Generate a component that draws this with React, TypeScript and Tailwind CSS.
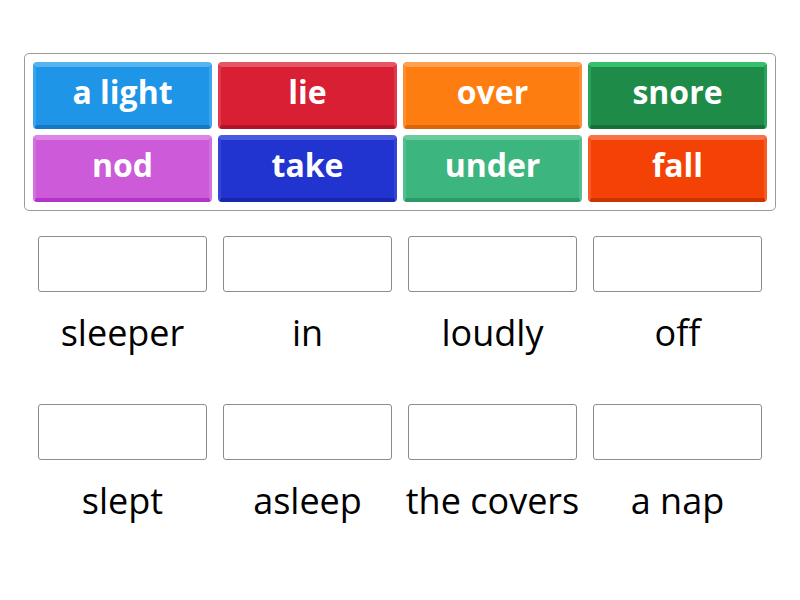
const tiles = [
  { word: 'a light', cls: 'bg-[#1e95e6] border-t-[#55b3f0] border-x-[#3aa4ec] border-b-[#1579c4]' },
  { word: 'lie', cls: 'bg-[#d81f34] border-t-[#e65565] border-x-[#df3a4c] border-b-[#b1142a]' },
  { word: 'over', cls: 'bg-[#fd7d11] border-t-[#ffa050] border-x-[#fe8d30] border-b-[#d9660a]' },
  { word: 'snore', cls: 'bg-[#1f8b49] border-t-[#35c06c] border-x-[#28a45a] border-b-[#16703a]' },
  { word: 'nod', cls: 'bg-[#cd5ad9] border-t-[#dc85e5] border-x-[#d46fdf] border-b-[#b533c8]' },
  { word: 'take', cls: 'bg-[#2134cf] border-t-[#4a5ae0] border-x-[#3344d6] border-b-[#1826ae]' },
  { word: 'under', cls: 'bg-[#3db57f] border-t-[#6acb9f] border-x-[#52bf8e] border-b-[#2c9a68]' },
  { word: 'fall', cls: 'bg-[#f44206] border-t-[#fa7346] border-x-[#f65a25] border-b-[#cc3300]' },
];

const targets = ['sleeper', 'in', 'loudly', 'off', 'slept', 'asleep', 'the covers', 'a nap'];

export default function App() {
  return (
    <div className="w-[800px] h-[600px] bg-white font-['Open_Sans',sans-serif]">
      <div className="pt-[53px] px-[24px]">
        <div className="border border-[#9a9a9a] rounded-[5px] p-[8px] grid grid-cols-4 gap-x-[6px] gap-y-[6px]">
          {tiles.map((t) => (
            <div
              key={t.word}
              className={`h-[67px] pb-[9px] rounded-[4px] border-t-[5px] border-x-[3px] border-b-[4px] flex items-center justify-center text-white font-bold text-[32px] leading-none ${t.cls}`}
            >
              {t.word}
            </div>
          ))}
        </div>
      </div>
      <div className="mt-[25px] pl-[38px] w-[762px] grid grid-cols-4 gap-x-[16px] gap-y-[30px]">
        {targets.map((w) => (
          <div key={w} className="flex flex-col">
            <div className="h-[56px] border border-[#8c8c8c] rounded-[3px] bg-white" />
            <div className="h-[82px] flex items-center justify-center text-[36px] text-black leading-none whitespace-nowrap">
              {w}
            </div>
          </div>
        ))}
      </div>
    </div>
  );
}
